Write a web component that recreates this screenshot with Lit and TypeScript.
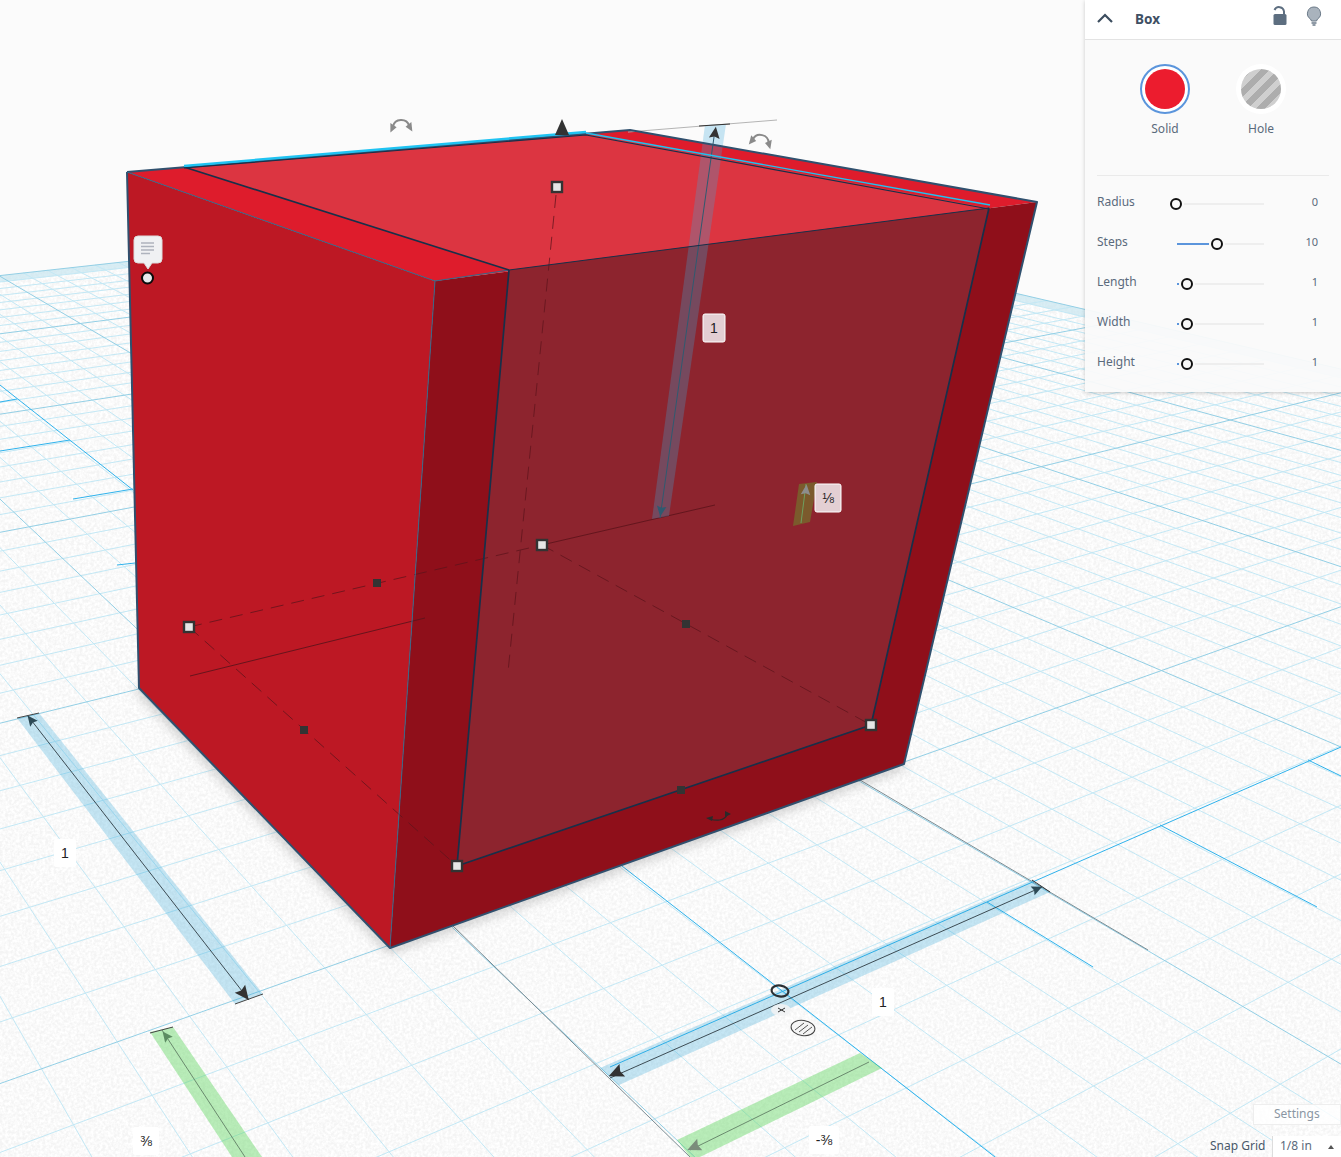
import { LitElement, html, css, svg } from "lit";
import { customElement } from "lit/decorators.js";

type P = [number, number];
const VA: P = [-620, -88];
const VB: P = [3300, -90];
const O: P = [637, 205];
const A = -0.01171;
const B = -0.00604;
const NEAR = 0.8;

function proj(u: number, v: number): P {
  const au = A * u, bv = B * v;
  const w = au + bv + 1;
  return [(au * VA[0] + bv * VB[0] + O[0]) / w, (au * VA[1] + bv * VB[1] + O[1]) / w];
}
const pts = (list: P[]) => list.map((p) => p[0].toFixed(1) + "," + p[1].toFixed(1)).join(" ");

function gridPath(major: boolean): string {
  let d = "";
  const seg = (a: P, b: P) => {
    d += `M${a[0].toFixed(1)} ${a[1].toFixed(1)}L${b[0].toFixed(1)} ${b[1].toFixed(1)}`;
  };
  for (let u = 0; u < 69; u++) {
    if ((u % 8 === 0) === major) seg(proj(u, 0), proj(u, (NEAR + A * u) / -B));
  }
  for (let v = 0; v < 133; v++) {
    if ((v % 8 === 0) === major) seg(proj(0, v), proj((NEAR + B * v) / -A, v));
  }
  return d;
}

const arrow = (x: number, y: number, deg: number, fill: string, s = 1) => svg`
  <path transform="translate(${x} ${y}) rotate(${deg}) scale(${s})" d="M0 -7L6 6L0 4L-6 6Z" fill=${fill}></path>`;

const handle = ([x, y]: P) => svg`<rect class="handle" x=${x - 5} y=${y - 5} width="10" height="10"></rect>`;
const dot = ([x, y]: P) => svg`<rect class="dot" x=${x - 4} y=${y - 4} width="8" height="8"></rect>`;

const label = (x: number, y: number, w: number, h: number, t: string, tint = false) => svg`
  <rect x=${x - w / 2} y=${y - h / 2} width=${w} height=${h} rx="2" class=${tint ? "lab tint" : "lab"}></rect>
  <text x=${x} y=${y + 5} class="labt">${t}</text>`;

const rotArrow = (x: number, y: number, deg: number, fill: string) => svg`
  <g transform="translate(${x} ${y}) rotate(${deg})" fill="none" stroke=${fill} stroke-width="2">
    <path d="M-8 1C-6 -7 6 -7 8 1"></path>
    <path d="M-11 7L-10.500 -2.500L-4.500 2Z" fill=${fill} stroke="none"></path>
    <path d="M11 7L10.500 -2.500L4.500 2Z" fill=${fill} stroke="none"></path>
  </g>`;

@customElement("app-root")
export class AppRoot extends LitElement {
  static styles = css`
    :host { display: block; position: relative; width: 100%; height: 1157px; overflow: hidden; background: #fbfbfb; font-family: "Noto Sans", sans-serif; }
    .scene { position: absolute; inset: 0; width: 100%; height: 100%; display: block; }
    .minor { stroke: #c3e8f5; stroke-width: 1; fill: none; }
    .major { stroke: #93cfe5; stroke-width: 1; fill: none; }
    .handle { fill: #e6e6e6; stroke: #333; stroke-width: 2.4; }
    .dot { fill: #333; }
    .lab { fill: #fff; }
    .tint { fill: #e3cfd3; stroke: #fff; stroke-width: 1; }
    .labt { font: 14px "Liberation Sans", Arial, sans-serif; text-anchor: middle; fill: #222; }

    .panel { position: absolute; top: 0; right: 0; width: 256px; height: 392px; background: rgba(250, 250, 250, 0.94); box-shadow: 0 1px 4px rgba(0,0,0,.2); color: #5a6a7c; font-size: 12px; display: flex; flex-direction: column; }
    .head { height: 39px; flex: none; background: #fff; border-bottom: 1px solid #e3e3e3; display: flex; align-items: center; padding: 0 19px 0 11px; }
    .head .chev { width: 18px; height: 10px; margin: -3px 21px 0 0; }
    .head .title { flex: 1; font-size: 13.5px; font-weight: 700; color: #3f5064; margin-top: -2px; }
    .head .lock { width: 14px; height: 20px; margin: -7px 19px 0 0; }
    .head .bulb { width: 16px; height: 21px; margin-top: -7px; }
    .types { display: flex; justify-content: center; gap: 46px; padding: 24px 0 0 0; height: 112px; box-sizing: border-box; }
    .type { width: 50px; display: flex; flex-direction: column; align-items: center; gap: 6px; }
    .swatch { width: 50px; height: 50px; box-sizing: border-box; border-radius: 50%; background: #fff; display: flex; align-items: center; justify-content: center; }
    .swatch.on { border: 2px solid #5b95dc; }
    .swatch i { display: block; width: 40px; height: 40px; border-radius: 50%; }
    .solid { background: #ec1c2e; }
    .hole { background: repeating-linear-gradient(-45deg, #adadad 0 6px, #cfcfcf 6px 12px); }
    .divider { height: 1px; background: #eaeaea; margin: 23px 12px 0; flex: none; }
    .rows { display: flex; flex-direction: column; padding-top: 7px; }
    .row { height: 40px; display: grid; grid-template-columns: 80px 87px 1fr; align-items: center; padding: 0 23px 0 12px; }
    .row .lbl { margin-top: -4px; }
    .row .val { text-align: right; font-size: 11px; margin-top: -3px; }
    .track { position: relative; height: 2px; background: #eee; margin-top: 2px; }
    .fill { position: absolute; left: 0; top: 0; height: 2px; background: #5b95dc; }
    .knob { position: absolute; top: -5px; width: 8px; height: 8px; margin-left: -6px; border: 2px solid #111; border-radius: 50%; background: #fafafa; box-shadow: 0 0 0 2px #fafafa; }
    .footer { position: absolute; right: 0; bottom: 0; width: 131px; display: flex; flex-direction: column; align-items: flex-end; gap: 11px; color: #5a6a7c; font-size: 12px; }
    .settings { width: 88px; height: 21px; box-sizing: border-box; background: rgba(255,255,255,.8); border: 1px solid #eee; color: #8a96a3; text-align: left; padding-left: 20px; line-height: 17px; }
    .snap { display: flex; align-items: center; height: 21px; width: 131px; }
    .snap span { width: 62px; color: #48586a; margin-top: -2px; }
    .box { flex: 1; height: 21px; box-sizing: border-box; background: #fff; border-left: 1px solid #ddd; padding-left: 7px; line-height: 19px; position: relative; }
    .box::after { content: ""; position: absolute; right: 7px; top: 9px; border: 3px solid transparent; border-top: 0; border-bottom: 4px solid #555; }
  `;

  private floor() {
    const far1 = proj(0, 132), far2 = proj(68, 0);
    return svg`
      <polygon points="${far1[0]},${far1[1]} ${O[0]},${O[1]} ${far2[0]},${far2[1]} 1341,3000 0,3000" fill="#f4f4f4" filter="url(#noise)"></polygon>
      <polygon points=${pts([proj(0, 0), proj(0, 132), proj(1, 132), proj(1, 0)])} fill="#bfe2ee" opacity=".6"></polygon>
      <polygon points=${pts([proj(0, 0), proj(68, 0), proj(68, 1), proj(0, 1)])} fill="#bfe2ee" opacity=".6"></polygon>
      <path class="minor" d=${gridPath(false)}></path>
      <path class="major" d=${gridPath(true)}></path>
    `;
  }

  private overlays() {
    return svg`
      <g fill="none" stroke-width="1">
        <path d="M860 780L1148 950" stroke="#7b8b92"></path>
        <path d="M452 925L690 1157" stroke="#7b8b92"></path>
        <path d="M610 1067L1341 747" stroke="#2fb2ec"></path>
        <path d="M622 866L995 1157" stroke="#2fb2ec"></path>
        <path d="M987 902L1093 967" stroke="#2fb2ec"></path>
        <path d="M1160 825L1317 907" stroke="#2fb2ec"></path>
        <path d="M1308 760L1341 776" stroke="#2fb2ec"></path>
        <path d="M0 385L133 490" stroke="#2fb2ec"></path>
        <path d="M0 402L17 399M0 451L70 440M73 499L133 489M117 565L135 563" stroke="#2fb2ec"></path>
      </g>
      <polygon points="17,718 39,713 263,994 235,1004" fill="#2fa5d8" opacity=".28"></polygon>
      <polygon points="600,1068 1032,880 1050,892 619,1085" fill="#2fa5d8" opacity=".28"></polygon>
      <polygon points="150,1032 173,1027 262,1157 232,1157 " fill="#58d558" opacity=".42"></polygon>
      <polygon points="677,1140 860,1053 882,1068 700,1157 690,1157" fill="#58d558" opacity=".42"></polygon>
      <path d="M28 716L249 1000" stroke="#3d4c54" fill="none"></path>
      <path d="M610 1078L1042 887" stroke="#3d4c54" fill="none"></path>
      <path d="M162 1030L245 1157" stroke="#6a8a6e" fill="none"></path>
      <path d="M690 1150L869 1062" stroke="#6a8a6e" fill="none"></path>
      <path d="M17 718L39 713M235 1004L263 994M150 1033L173 1027" stroke="#444" fill="none"></path>
      <path d="M1032 880L1050 892" stroke="#333" fill="none"></path>
      ${arrow(31, 720, -38, "#2d4a56", 0.8)}
      ${arrow(244, 994, 142, "#333", 1.1)}
      ${arrow(166, 1036, -38, "#5c8c62", 0.8)}
      ${arrow(616, 1073, -114, "#333", 1.15)}
      ${arrow(1037, 889, 66, "#2d4a56", 0.8)}
      ${arrow(694, 1147, -114, "#7b8d7b", 1.05)}
    `;
  }

  private cube() {
    return svg`
      <path d="M139 688L390 948L904 764" stroke="#555" stroke-width="7" fill="none" filter="url(#blur)" opacity=".4"></path>
      <polygon points="127,172 630,130 1037,202 435,281" fill="#de1c2c"></polygon>
      <polygon points="127,172 435,281 390,948 139,688" fill="#bd1824"></polygon>
      <polygon points="435,281 1037,202 904,764 390,948" fill="#8f0f1a"></polygon>
      <polygon points="184,167 586,133 989,208 509,270" fill="#dc3541"></polygon>
      <polygon points="509,270 989,208 871,725 457,866" fill="#8d242e"></polygon>

      <!-- dashed construction lines -->
      <g fill="none" stroke="#5e141c" stroke-width=".9" stroke-dasharray="13 8" opacity=".85">
        <path d="M556 195L508 672"></path>
        <path d="M189 627L542 545"></path>
        <path d="M189 627L457 866"></path>
        <path d="M542 545L871 725"></path>
      </g>
      <path d="M190 676L425 618M546 544L715 505" stroke="#5e141c" fill="none" opacity=".9"></path>

      <polygon points="705,125 726,124 669,516 652,519" fill="#3caadc" opacity=".28"></polygon>
      <polygon points="799,484 817,482 810,522 793,526" fill="#7b5a2c"></polygon>
      <path d="M806 484L801 523" stroke="#6ea060" fill="none"></path>
      ${arrow(806, 490, 6, "#8d8d8d", 0.8)}
      <path d="M715 130L660 518" stroke="#2f5a70" fill="none"></path>
      ${arrow(715, 133, 8, "#333", 0.9)}
      ${arrow(661, 511, 188, "#2f5a70", 0.8)}
      <path d="M628 132L777 120" stroke="#b4b4b4" fill="none"></path>
      <path d="M699 126L730 124" stroke="#333" fill="none"></path>

      <g fill="none" stroke-linejoin="round">
        <path d="M127 172L139 688L390 948L904 764L1037 202L630 130L127 172" stroke="#30506e" stroke-width="2"></path>
        <path d="M127 172L435 281L390 948M435 281L509 270" stroke="#35688a" stroke-width="1"></path>
        <path d="M184 167L509 270" stroke="#17304a" stroke-width="1.600"></path>
        <path d="M509 270L989 208" stroke="#17304a" stroke-width="1"></path>
        <path d="M509 270L457 866L871 725L989 208" stroke="#17304a" stroke-width="1.700"></path>
        <path d="M184 166L586 132" stroke="#1fc3f2" stroke-width="2.500"></path>
        <path d="M586 133L990 205" stroke="#1fc3f2" stroke-width="1.400"></path>
        <path d="M184 168L586 135L989 209" stroke="#17304a" stroke-width="1.200"></path>
      </g>

      ${handle([557, 187])}${handle([542, 545])}${handle([189, 627])}${handle([871, 725])}${handle([457, 866])}
      ${dot([377, 583])}${dot([686, 624])}${dot([304, 730])}${dot([681, 790])}
      <path d="M555 135L562 119L569 135Z" fill="#333"></path>
    `;
  }

  private widgets() {
    return svg`
      ${rotArrow(401, 125, -3, "#8a8a8a")}
      ${rotArrow(761, 140, 12, "#8a8a8a")}
      <path d="M710 819C716 821 724 821 727 815" fill="none" stroke="#2a2a2a" stroke-width="1.200"></path>
      <path d="M706 818L713 816L712 821ZM731 814L725 811L725 817Z" fill="#2a2a2a"></path>

      <g>
        <path d="M138 236H158A4 4 0 0 1 162 240V259A4 4 0 0 1 158 263H152L148 269L144 263H138A4 4 0 0 1 134 259V240A4 4 0 0 1 138 236Z" fill="#f0f1f3" stroke="#dcdcdc"></path>
        <path d="M141 243H154M141 246.500H154M141 250H154M141 253.500H150" stroke="#aeb3bd" stroke-width="1.300" fill="none"></path>
        <circle cx="147.500" cy="278" r="5.500" fill="#e8e9ec" stroke="#0a0a0a" stroke-width="2"></circle>
      </g>

      <ellipse cx="780" cy="991" rx="8.500" ry="5.500" transform="rotate(8 780 991)" fill="none" stroke="#2a2f33" stroke-width="2.200"></ellipse>
      <ellipse cx="781" cy="1010" rx="10" ry="6" fill="#f1f2f3" opacity=".9"></ellipse>
      <path d="M778 1008L785 1012M785 1008L778 1012" stroke="#333" fill="none"></path>
      <ellipse cx="803" cy="1028" rx="12" ry="7.500" transform="rotate(8 803 1028)" fill="#f5f5f5" stroke="#444"></ellipse>
      <path d="M795 1030L804 1023M799 1032L808 1025M803 1034L812 1027" stroke="#555" fill="none"></path>

      ${label(714, 328, 22, 28, "1", true)}
      ${label(828, 498, 26, 28, "⅛", true)}
      ${label(65, 853, 22, 28, "1")}
      ${label(883, 1002, 22, 28, "1")}
      ${label(146, 1141, 26, 28, "⅜")}
      ${label(824, 1140, 30, 28, "-⅜")}
    `;
  }

  private row(name: string, value: string, knob: number, fill: number) {
    return html`<div class="row">
      <span class="lbl">${name}</span>
      <div class="track">
        ${fill > 0 ? html`<div class="fill" style="width:${fill}px"></div>` : ""}
        <div class="knob" style="left:${knob}px"></div>
      </div>
      <span class="val">${value}</span>
    </div>`;
  }

  render() {
    return html`
      <svg class="scene" viewBox="0 0 1341 1157">
        <defs>
          <filter id="noise" x="0" y="0" width="1341" height="1157" filterUnits="userSpaceOnUse">
            <feTurbulence type="fractalNoise" baseFrequency="0.35" numOctaves="3" seed="4" result="t"></feTurbulence>
            <feColorMatrix in="t" type="matrix" values="0 0 0 0 1  0 0 0 0 1  0 0 0 0 1  2.400 0 0 0 -0.700" result="n"></feColorMatrix>
            <feComposite in="n" in2="SourceGraphic" operator="in" result="c"></feComposite>
            <feMerge><feMergeNode in="SourceGraphic"></feMergeNode><feMergeNode in="c"></feMergeNode></feMerge>
          </filter>
          <filter id="blur" x="-10%" y="-10%" width="120%" height="120%"><feGaussianBlur stdDeviation="6"></feGaussianBlur></filter>
        </defs>
        ${this.floor()}
        ${this.overlays()}
        ${this.cube()}
        ${this.widgets()}
      </svg>

      <aside class="panel">
        <div class="head">
          <svg class="chev" viewBox="0 0 18 10"><path d="M2 9L9 2L16 9" fill="none" stroke="#3c4d5f" stroke-width="2.200"></path></svg>
          <span class="title">Box</span>
          <svg class="lock" viewBox="0 0 14 20"><path d="M1.500 4A5 5 0 0 1 11 5.500V9" fill="none" stroke="#5d6e80" stroke-width="2"></path><rect x=".5" y="8" width="13" height="11" rx="1.500" fill="#5d6e80"></rect></svg>
          <svg class="bulb" viewBox="0 0 16 21"><path d="M8 1A6.500 6.500 0 0 0 4.500 13L5.500 15H10.500L11.500 13A6.500 6.500 0 0 0 8 1Z" fill="#a9b3bd" stroke="#6b7a89" stroke-width="1"></path><path d="M5.500 17H10.500M6.500 19H9.500" stroke="#6b7a89" stroke-width="1.300"></path></svg>
        </div>
        <div class="types">
          <div class="type"><div class="swatch on"><i class="solid"></i></div>Solid</div>
          <div class="type"><div class="swatch"><i class="hole"></i></div>Hole</div>
        </div>
        <div class="divider"></div>
        <div class="rows">
          ${this.row("Radius", "0", -1, 0)}
          ${this.row("Steps", "10", 40, 32)}
          ${this.row("Length", "1", 10, 2)}
          ${this.row("Width", "1", 10, 2)}
          ${this.row("Height", "1", 10, 2)}
        </div>
      </aside>

      <div class="footer">
        <div class="settings">Settings</div>
        <div class="snap"><span>Snap Grid</span><div class="box">1/8 in</div></div>
      </div>
    `;
  }
}
